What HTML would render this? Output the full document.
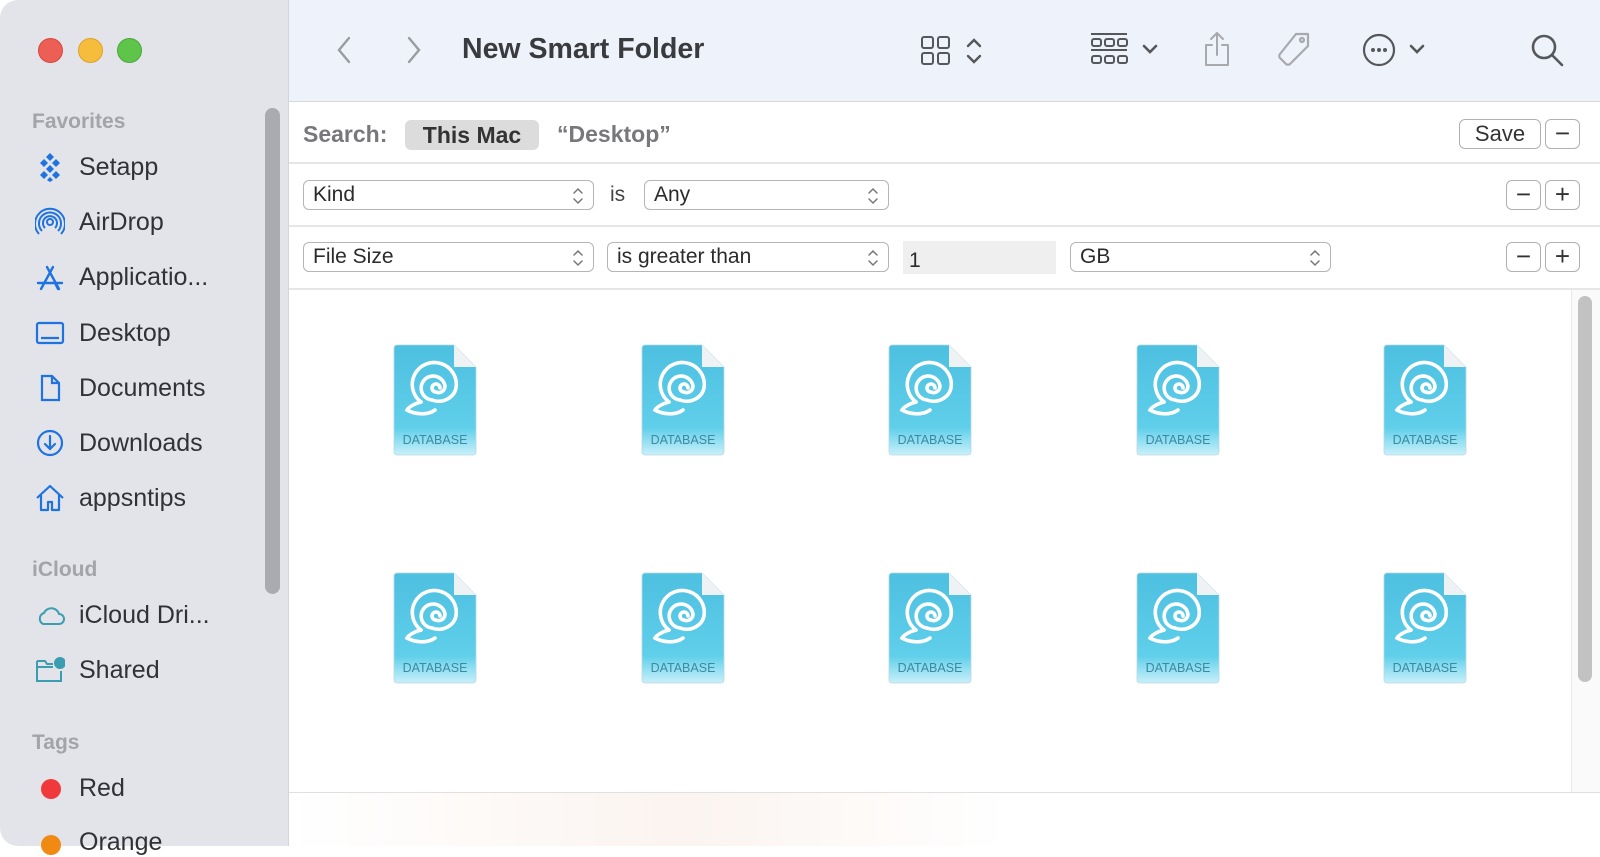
<!DOCTYPE html>
<html><head><meta charset="utf-8"><style>
*{margin:0;padding:0;box-sizing:border-box}
body{width:1600px;height:846px;overflow:hidden;background:#fff;font-family:"Liberation Sans",sans-serif;position:relative;color:#333}
.a{position:absolute}
#side{left:0;top:0;width:289px;height:846px;background:#e2e4ea;border-right:1px solid #d4d5da;border-radius:18px 0 0 18px}
.dot{position:absolute;width:25px;height:25px;border-radius:50%;top:38px}
.hd{position:absolute;left:32px;font-size:21px;font-weight:bold;color:#a2a4aa}
.it{position:absolute;left:79px;font-size:25px;color:#303236;line-height:30px}
.ic{position:absolute;left:35px;width:30px;height:30px}
#tb{left:289px;top:0;width:1311px;height:102px;background:#eef2fa;border-bottom:1px solid #d6d8dc}
.row{position:absolute;left:289px;width:1311px;border-bottom:2px solid #e6e6e6;background:#fff}
.pop{position:absolute;height:30px;border:1.5px solid #b5b5b5;border-radius:6px;font-size:21px;padding-left:9px;line-height:28px;color:#2b2b2b;background:#fff}
.pop svg{position:absolute;right:9px;top:6px}
.btn{position:absolute;height:30px;width:35px;border:1.5px solid #b0b0b0;border-radius:6px;font-size:26px;text-align:center;line-height:27px;color:#333;background:#fff}
</style></head><body>
<svg width="0" height="0" style="position:absolute"><defs>
<g id="ud"><path d="M2 6l4-4 4 4M2 12l4 4 4-4" fill="none" stroke="#777" stroke-width="1.5" stroke-linecap="round"/></g>
<linearGradient id="g" x1="0" y1="0" x2="0" y2="1"><stop offset="0" stop-color="#4dbfe0"/><stop offset=".75" stop-color="#5fcfea"/><stop offset="1" stop-color="#c9f0fa"/></linearGradient>
<g id="f"><path d="M6 1h57l22 22v85a3 3 0 0 1-3 3H6a3 3 0 0 1-3-3V4a3 3 0 0 1 3-3z" fill="url(#g)" stroke="#b8d8e2" stroke-width=".8"/><path d="M63 1v22h22z" fill="#eef2f4"/><g fill="none" stroke="#fff" stroke-width="3.6" stroke-linecap="round"><path d="M30 58a22 22 0 1 1 35-14c-2 10-14 16-24 12"/><path d="M41 56a12 12 0 1 1 13-14c0 5-5 8-9 6a4 4 0 1 1 4-4"/><path d="M30 58c-8 2-13 6-14 8 7 4 20 6 28 0"/></g><text x="44" y="100" font-family="Liberation Sans,sans-serif" font-size="12.5" fill="#3a8aa0" text-anchor="middle">DATABASE</text></g>
</defs></svg>
<div class="a" id="side">
<div class="dot" style="left:38px;background:#ed5f56;border:1px solid #d6493f"></div>
<div class="dot" style="left:78px;background:#f6bd3c;border:1px solid #dca22a"></div>
<div class="dot" style="left:117px;background:#5fc44a;border:1px solid #4aa83a"></div>
<div class="a" style="left:265px;top:108px;width:15px;height:486px;background:#a9abb0;border-radius:8px"></div>
<div class="hd" style="top:110px">Favorites</div>
<svg class="ic" style="top:152px" viewBox="0 0 30 30"><g fill="#1f73e0"><path d="M15 1l4 4-4 4-4-4z"/><path d="M9 7l4 4-4 4-4-4z"/><path d="M21 7l4 4-4 4-4-4z"/><path d="M15 13l4 4-4 4-4-4z"/><path d="M9 19l4 4-4 4-4-4z"/><path d="M21 19l4 4-4 4-4-4z"/><path d="M15 25l3 3-3 2-3-2z"/></g></svg>
<div class="it" style="top:152px">Setapp</div>
<svg class="ic" style="top:207px" viewBox="0 0 30 30" fill="none" stroke="#1f73e0" stroke-width="2"><circle cx="15" cy="15" r="3"/><path d="M10 21a7 7 0 1 1 10 0M7 24a11 11 0 1 1 16 0M4 27a15 15 0 1 1 22 0"/></svg>
<div class="it" style="top:207px">AirDrop</div>
<svg class="ic" style="top:263px" viewBox="0 0 30 30" fill="none" stroke="#1f73e0" stroke-width="2.4" stroke-linecap="round"><path d="M12 4l12 22M18 4L6 26M3 20h24M20 20l3 6"/></svg>
<div class="it" style="top:262px">Applicatio...</div>
<svg class="ic" style="top:318px" viewBox="0 0 30 30" fill="none" stroke="#1f73e0" stroke-width="2.2"><rect x="2" y="5" width="26" height="20" rx="2"/><path d="M6 20h18"/></svg>
<div class="it" style="top:318px">Desktop</div>
<svg class="ic" style="top:373px" viewBox="0 0 30 30" fill="none" stroke="#1f73e0" stroke-width="2.2"><path d="M7 3h10l7 7v17H7z M17 3v7h7"/></svg>
<div class="it" style="top:373px">Documents</div>
<svg class="ic" style="top:428px" viewBox="0 0 30 30" fill="none" stroke="#1f73e0" stroke-width="2.2" stroke-linecap="round"><circle cx="15" cy="15" r="12"/><path d="M15 8v13M10 16l5 5 5-5"/></svg>
<div class="it" style="top:428px">Downloads</div>
<svg class="ic" style="top:483px" viewBox="0 0 30 30" fill="none" stroke="#1f73e0" stroke-width="2.2" stroke-linejoin="round"><path d="M2 15L15 3l13 12M6 12v15h7v-8h4v8h7V12"/></svg>
<div class="it" style="top:483px">appsntips</div>
<div class="hd" style="top:558px">iCloud</div>
<svg class="ic" style="top:600px" viewBox="0 0 30 30" fill="none" stroke="#3a9eb0" stroke-width="2"><path d="M8 24h16a5 5 0 0 0 0-10 8 8 0 0 0-15-1 6 6 0 0 0-1 11z"/></svg>
<div class="it" style="top:600px">iCloud Dri...</div>
<svg class="ic" style="top:655px" viewBox="0 0 30 30" fill="none" stroke="#3a9eb0" stroke-width="2"><path d="M2 6h8l2 3h6M2 6v20h24v-10M2 12h16"/><circle cx="25" cy="8" r="5" fill="#3a9eb0"/></svg>
<div class="it" style="top:655px">Shared</div>
<div class="hd" style="top:731px">Tags</div>
<div class="a" style="left:41px;top:779px;width:20px;height:20px;border-radius:50%;background:#f0393a"></div>
<div class="it" style="top:773px">Red</div>
<div class="a" style="left:41px;top:835px;width:20px;height:20px;border-radius:50%;background:#f08a12"></div>
<div class="it" style="top:827px">Orange</div>
</div>

<div class="a" id="tb">
<svg class="a" style="left:43px;top:35px" width="24" height="30" viewBox="0 0 24 30" fill="none" stroke="#9a9ca2" stroke-width="2.4" stroke-linecap="round"><path d="M17 3L7 15l10 12"/></svg>
<svg class="a" style="left:113px;top:35px" width="24" height="30" viewBox="0 0 24 30" fill="none" stroke="#9a9ca2" stroke-width="2.4" stroke-linecap="round"><path d="M7 3l10 12-10 12"/></svg>
<div class="a" style="left:173px;top:33px;font-size:28.5px;font-weight:bold;color:#3a3b3e">New Smart Folder</div>
<svg class="a" style="left:631px;top:35px" width="32" height="32" viewBox="0 0 32 32" fill="none" stroke="#55575c" stroke-width="2"><rect x="2" y="2" width="11" height="11" rx="2"/><rect x="18" y="2" width="11" height="11" rx="2"/><rect x="2" y="18" width="11" height="11" rx="2"/><rect x="18" y="18" width="11" height="11" rx="2"/></svg>
<svg class="a" style="left:676px;top:36px" width="18" height="30" viewBox="0 0 18 30" fill="none" stroke="#55575c" stroke-width="2.4" stroke-linecap="round"><path d="M3 10l6-6 6 6M3 20l6 6 6-6"/></svg>
<svg class="a" style="left:801px;top:32px" width="38" height="36" viewBox="0 0 38 36" fill="none" stroke="#55575c" stroke-width="2"><path d="M1 2h36M1 18h36"/><rect x="2" y="7" width="9" height="7" rx="2"/><rect x="15" y="7" width="9" height="7" rx="2"/><rect x="28" y="7" width="9" height="7" rx="2"/><rect x="2" y="24" width="9" height="7" rx="2"/><rect x="15" y="24" width="9" height="7" rx="2"/><rect x="28" y="24" width="9" height="7" rx="2"/></svg>
<svg class="a" style="left:852px;top:43px" width="18" height="12" viewBox="0 0 18 12" fill="none" stroke="#55575c" stroke-width="2.6" stroke-linecap="round"><path d="M3 3l6 6 6-6"/></svg>
<svg class="a" style="left:913px;top:30px" width="30" height="40" viewBox="0 0 30 40" fill="none" stroke="#a7a9ae" stroke-width="2" stroke-linecap="round" stroke-linejoin="round"><path d="M15 3v22M9 9l6-6 6 6M10 15H4v20h22V15h-6"/></svg>
<svg class="a" style="left:985px;top:30px" width="40" height="40" viewBox="0 0 40 40" fill="none" stroke="#a7a9ae" stroke-width="2.2" stroke-linejoin="round"><path d="M22 4h12v12L16 34a3 3 0 0 1-4 0l-6-6a3 3 0 0 1 0-4z"/><circle cx="28" cy="10" r="2"/></svg>
<svg class="a" style="left:1072px;top:32px" width="36" height="36" viewBox="0 0 36 36" fill="none" stroke="#55575c" stroke-width="2.2"><circle cx="18" cy="18" r="15"/><g fill="#55575c" stroke="none"><circle cx="12" cy="18" r="2"/><circle cx="18" cy="18" r="2"/><circle cx="24" cy="18" r="2"/></g></svg>
<svg class="a" style="left:1119px;top:43px" width="18" height="12" viewBox="0 0 18 12" fill="none" stroke="#55575c" stroke-width="2.6" stroke-linecap="round"><path d="M3 3l6 6 6-6"/></svg>
<svg class="a" style="left:1240px;top:32px" width="36" height="36" viewBox="0 0 36 36" fill="none" stroke="#55575c" stroke-width="2.6" stroke-linecap="round"><circle cx="15" cy="15" r="11"/><path d="M23 23l10 10"/></svg>
</div>

<div class="row" style="top:102px;height:62px">
<div class="a" style="left:14px;top:19px;font-size:23px;font-weight:bold;color:#76787c">Search:</div>
<div class="a" style="left:116px;top:18px;width:134px;height:30px;border-radius:6px;background:#dcdcdc;font-size:23px;font-weight:bold;color:#333;text-align:center;line-height:31px">This Mac</div>
<div class="a" style="left:268px;top:19px;font-size:23px;font-weight:bold;color:#76787c">“Desktop”</div>
<div class="btn" style="left:1170px;top:17px;width:82px;font-size:22px;line-height:28px">Save</div>
<div class="btn" style="left:1256px;top:17px">−</div>
</div>
<div class="row" style="top:164px;height:63px">
<div class="pop" style="left:14px;top:16px;width:291px">Kind<svg width="12" height="18"><use href="#ud"/></svg></div>
<div class="a" style="left:321px;top:19px;font-size:21px;color:#444">is</div>
<div class="pop" style="left:355px;top:16px;width:245px">Any<svg width="12" height="18"><use href="#ud"/></svg></div>
<div class="btn" style="left:1217px;top:16px">−</div>
<div class="btn" style="left:1256px;top:16px">+</div>
</div>
<div class="row" style="top:227px;height:63px">
<div class="pop" style="left:14px;top:15px;width:291px">File Size<svg width="12" height="18"><use href="#ud"/></svg></div>
<div class="pop" style="left:318px;top:15px;width:282px">is greater than<svg width="12" height="18"><use href="#ud"/></svg></div>
<div class="a" style="left:614px;top:14px;width:153px;height:33px;background:#efefef;font-size:21px;padding:8px 0 0 6px;color:#2b2b2b">1</div>
<div class="pop" style="left:781px;top:15px;width:261px">GB<svg width="12" height="18"><use href="#ud"/></svg></div>
<div class="btn" style="left:1217px;top:15px">−</div>
<div class="btn" style="left:1256px;top:15px">+</div>
</div>
<div class="a" style="left:1571px;top:290px;width:29px;height:502px;background:#fafafa;border-left:1px solid #e8e8e8"></div>
<div class="a" style="left:1578px;top:296px;width:14px;height:386px;background:#c2c2c2;border-radius:7px"></div>
<div class="a" style="left:289px;top:792px;width:1311px;height:54px;background:linear-gradient(90deg,#fff 0%,#fbf4f0 30%,#fff 55%);border-top:1px solid #e0e0e0"></div>
<svg class="a" style="left:0;top:0" width="1570" height="846">
<use href="#f" x="391" y="344"/><use href="#f" x="639" y="344"/><use href="#f" x="886" y="344"/><use href="#f" x="1134" y="344"/><use href="#f" x="1381" y="344"/>
<use href="#f" x="391" y="572"/><use href="#f" x="639" y="572"/><use href="#f" x="886" y="572"/><use href="#f" x="1134" y="572"/><use href="#f" x="1381" y="572"/>
</svg>
</body></html>
